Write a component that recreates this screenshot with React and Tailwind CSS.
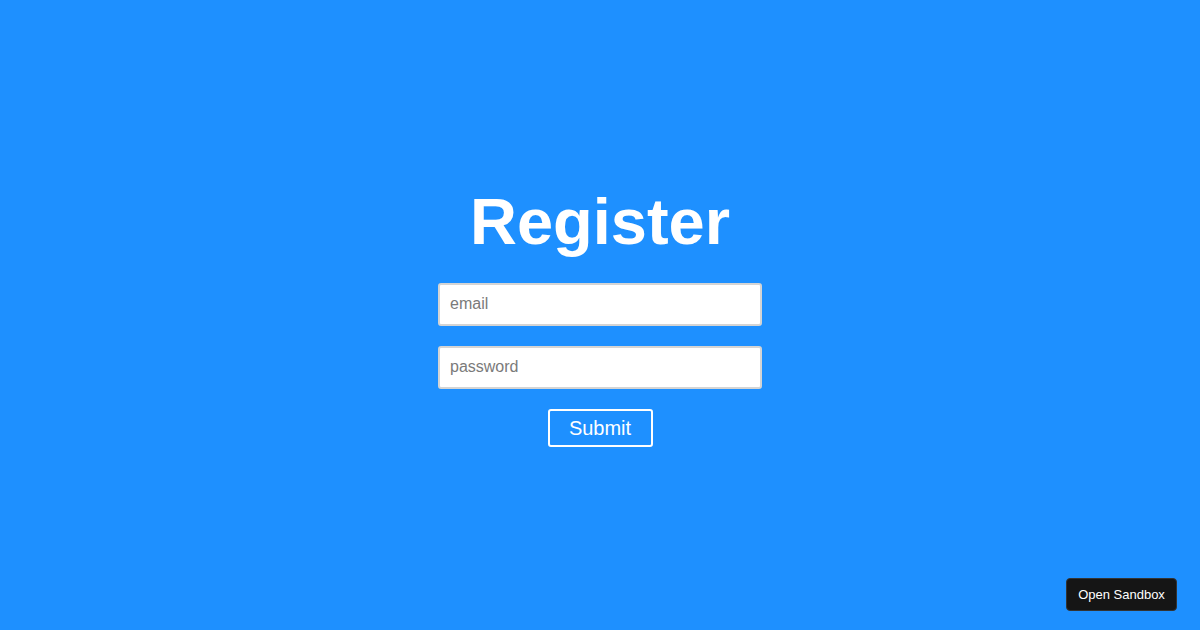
import React from 'react';

// Simple register form on a blue page
const App = () => {
  return (
    <div className="relative flex h-screen w-full flex-col items-center justify-center bg-[#1e90ff] font-['Liberation_Sans',Arial,sans-serif]">
      <h1 className="text-[65px] font-bold leading-[76px] text-white">Register</h1>

      <form className="mt-[23px] flex flex-col items-center" onSubmit={(e) => e.preventDefault()}>
        <input
          type="text"
          placeholder="email"
          className="h-[43px] w-[324px] rounded-[3px] border-2 border-[#d4d4d4] bg-white px-[10px] text-[16px] text-gray-800 placeholder:text-[#7a7a7a] outline-none"
        />
        <input
          type="password"
          placeholder="password"
          className="mt-[20px] h-[43px] w-[324px] rounded-[3px] border-2 border-[#d4d4d4] bg-white px-[10px] text-[16px] text-gray-800 placeholder:text-[#7a7a7a] outline-none"
        />
        <button
          type="submit"
          className="mt-[20px] h-[38px] w-[105px] rounded-[3px] border-2 border-white text-[20px] text-white"
        >
          Submit
        </button>
      </form>

      {/* floating sandbox link */}
      <button className="absolute bottom-[19px] right-[23px] h-[33px] w-[111px] rounded-[4px] border border-[#333] bg-[#151515] text-[13px] text-white">
        Open Sandbox
      </button>
    </div>
  );
};

export default App;
